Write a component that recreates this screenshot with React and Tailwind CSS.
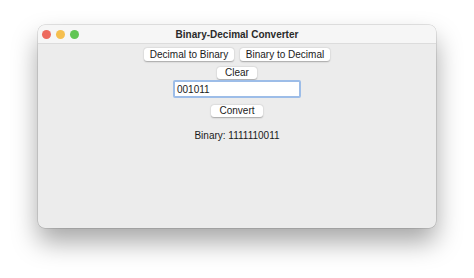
export default function App() {
  const btn =
    'bg-white rounded-[3px] shadow-[0_0.5px_1.5px_rgba(0,0,0,0.3)] text-[10px] leading-none text-[#1a1a1a] flex items-center justify-center';
  return (
    <div
      className="w-[474px] h-[278px] bg-white pt-[25px] pl-[38px]"
      style={{ fontFamily: '"Liberation Sans", Arial, sans-serif' }}
    >
      <div className="w-[398px] h-[203px] rounded-[7px] bg-[#ececec] shadow-[0_14px_26px_rgba(0,0,0,0.35),0_0_0_0.5px_rgba(0,0,0,0.2)] overflow-hidden flex flex-col">
        <div className="relative h-[19px] bg-[#f6f6f6] border-b border-[#dcdcdc] flex items-center justify-center">
          <div className="absolute left-[4px] top-[5px] flex gap-[5px]">
            <span className="w-[9px] h-[9px] rounded-full bg-[#ed6a5e]" />
            <span className="w-[9px] h-[9px] rounded-full bg-[#f5bf4f]" />
            <span className="w-[9px] h-[9px] rounded-full bg-[#61c554]" />
          </div>
          <span className="text-[10px] font-bold text-[#2a2a2a]">Binary-Decimal Converter</span>
        </div>
        <div className="flex flex-col items-center pt-[4px]">
          <div className="flex gap-[6px]">
            <div className={`${btn} w-[90px] h-[13px]`}>Decimal to Binary</div>
            <div className={`${btn} w-[90px] h-[13px]`}>Binary to Decimal</div>
          </div>
          <div className={`${btn} w-[40px] h-[12px] mt-[6px]`}>Clear</div>
          <div className="mt-[1px] w-[128px] h-[18px] bg-white border-2 border-[#9dbde8] rounded-[2px] flex items-center px-[2px] text-[10px] text-[#1a1a1a]">
            001011
          </div>
          <div className={`${btn} w-[52px] h-[12px] mt-[7px]`}>Convert</div>
          <div className="mt-[11px] text-[10px] text-[#1a1a1a]">Binary: 1111110011</div>
        </div>
      </div>
    </div>
  );
}
